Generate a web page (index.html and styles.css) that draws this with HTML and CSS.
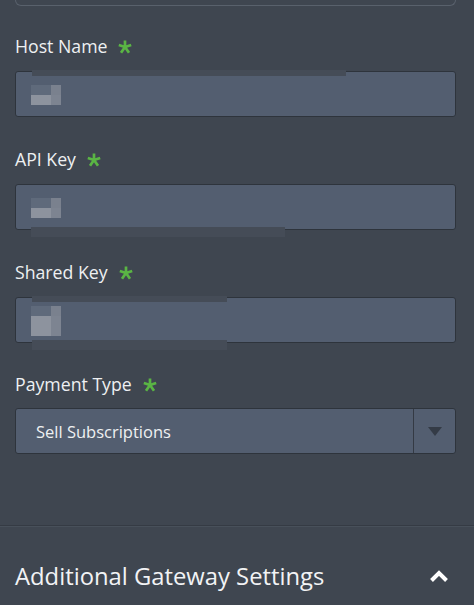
FILE: index.html
```html
<!DOCTYPE html>
<html lang="en">
<head>
<meta charset="utf-8">
<title>Gateway Settings</title>
<link rel="stylesheet" href="styles.css">
</head>
<body>
<div class="form">
  <div class="top-box"></div>

  <div class="field">
    <div class="label">Host Name <svg class="req" viewBox="0 0 14 14"><path d="M7 0.5V7M7 7L0.8 5M7 7L13.2 5M7 7L3 12.8M7 7L11 12.8"/></svg></div>
    <div class="input">
      <span class="strip strip-top" style="left:16px;width:314px"></span>
      <span class="pix"><i class="c1"></i><i class="c2"></i><i class="c3"></i><i class="c4"></i></span>
    </div>
  </div>

  <div class="field">
    <div class="label">API Key <svg class="req" viewBox="0 0 14 14"><path d="M7 0.5V7M7 7L0.8 5M7 7L13.2 5M7 7L3 12.8M7 7L11 12.8"/></svg></div>
    <div class="input">
      <span class="pix"><i class="c1"></i><i class="c2"></i><i class="c3"></i><i class="c4"></i></span>
      <span class="strip strip-bottom" style="left:15px;width:254px"></span>
    </div>
  </div>

  <div class="field">
    <div class="label">Shared Key <svg class="req" viewBox="0 0 14 14"><path d="M7 0.5V7M7 7L0.8 5M7 7L13.2 5M7 7L3 12.8M7 7L11 12.8"/></svg></div>
    <div class="input">
      <span class="strip strip-top" style="left:16px;width:195px"></span>
      <span class="pix pix-low"><i class="c1"></i><i class="c2"></i><i class="c3"></i><i class="c4"></i></span>
      <span class="strip strip-bottom" style="left:16px;width:195px"></span>
    </div>
  </div>

  <div class="field field-last">
    <div class="label">Payment Type <svg class="req" viewBox="0 0 14 14"><path d="M7 0.5V7M7 7L0.8 5M7 7L13.2 5M7 7L3 12.8M7 7L11 12.8"/></svg></div>
    <div class="select">
      <span class="select-value">Sell Subscriptions</span>
      <span class="select-arrow"><svg viewBox="0 0 14 9"><path d="M0 0H14L7 9Z"/></svg></span>
    </div>
  </div>
</div>

<div class="section">
  <h2 class="section-title">Additional Gateway Settings</h2>
  <svg class="chevron" viewBox="0 0 20 14"><path d="M2.5 11.5L10 4L17.5 11.5"/></svg>
</div>
</body>
</html>
```

FILE: styles.css
```css
html, body {
  margin: 0;
  padding: 0;
  background: #3f4650;
}

body {
  font-family: "Open Sans", "Noto Sans", sans-serif;
  color: #eef0f2;
  height: 605px;
  overflow: hidden;
}

.form {
  padding: 0 18px 0 15px;
}

.top-box {
  height: 5px;
  border: 1px solid #59616c;
  border-top: 0;
  border-radius: 0 0 6px 6px;
}

.field {
  margin-top: 28px;
  margin-bottom: 2px;
}

.field + .field {
  margin-top: 30px;
}

.field-last {
  margin-top: 29px !important;
}

.field-last .label {
  margin-bottom: 12px;
}

.label {
  display: flex;
  align-items: center;
  gap: 11px;
  font-size: 17.7px;
  line-height: 24px;
  height: 24px;
  margin-bottom: 13px;
}

.req {
  width: 14px;
  height: 14px;
  margin-top: 1px;
  fill: none;
  stroke: #5ab544;
  stroke-width: 2.7;
  stroke-linecap: butt;
}

.input {
  position: relative;
  height: 44px;
  background: #535e70;
  border: 1px solid #2e343c;
  border-radius: 3px;
}

.strip {
  position: absolute;
  height: 6px;
  background: #454c57;
}

.strip-top {
  top: -2px;
}

.strip-bottom {
  bottom: -8px;
  height: 10px;
}

.pix {
  position: absolute;
  left: 15px;
  top: 13px;
  display: grid;
  grid-template-columns: 20px 10px;
  grid-template-rows: 10px 10px;
}

.pix-low {
  top: 8px;
  grid-template-rows: 10px 20px;
}

.pix i { display: block; }
.pix .c1 { background: #5f6a7b; }
.pix .c2 { background: #7a818e; }
.pix .c3 { background: #8d939e; }
.pix .c4 { background: #7d8491; }

.select {
  display: flex;
  align-items: stretch;
  height: 44px;
  background: #535e70;
  border: 1px solid #2e343c;
  border-radius: 3px;
}

.select-value {
  flex: 1;
  display: flex;
  align-items: center;
  padding-left: 20px;
  font-size: 16.5px;
}

.select-arrow {
  width: 41px;
  border-left: 1px solid #343a44;
  display: flex;
  align-items: center;
  justify-content: center;
}

.select-arrow svg {
  width: 14px;
  height: 9px;
  fill: #343b46;
}

.section {
  margin-top: 71px;
  border-top: 1px solid #353b44;
  box-shadow: inset 0 1px 0 #48505a;
  display: flex;
  align-items: center;
  justify-content: space-between;
  padding: 34px 25px 0 15px;
}

.section-title {
  margin: 0;
  font-weight: 400;
  font-size: 23.8px;
  line-height: 32px;
  color: #f2f3f5;
}

.chevron {
  width: 20px;
  height: 14px;
  fill: none;
  stroke: #ffffff;
  stroke-width: 4;
  stroke-linejoin: miter;
}
```
